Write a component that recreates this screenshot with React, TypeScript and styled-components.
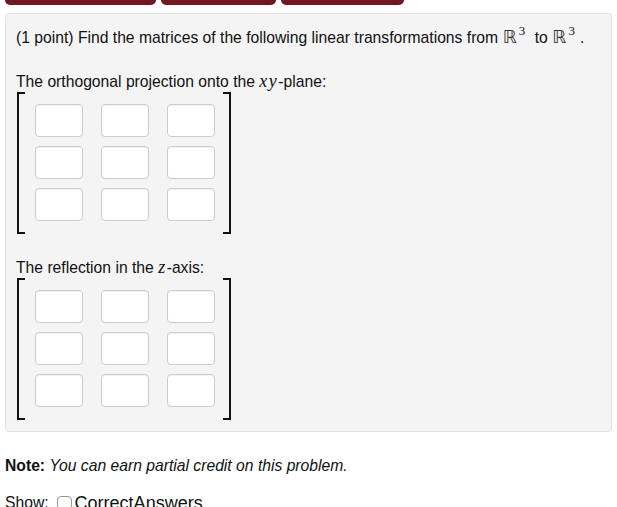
import React from 'react'
import styled, { createGlobalStyle } from 'styled-components'

const GlobalStyle = createGlobalStyle`
  html, body {
    margin: 0;
    padding: 0;
    background: #ffffff;
    overflow: hidden;
  }
  body {
    font-family: "Liberation Sans", Arial, Helvetica, sans-serif;
    font-size: 15.7px;
    color: #111111;
  }
`

const Page = styled.div`
  width: 617px;
  height: 507px;
  overflow: hidden;
`

const TabRow = styled.div`
  display: flex;
  gap: 5px;
  padding-left: 5px;
  height: 5px;
`

const Tab = styled.div<{ $w: number }>`
  width: ${(p) => p.$w}px;
  height: 5px;
  background: #6e1a24;
  border-radius: 0 0 5px 5px;
`

const Problem = styled.div`
  margin: 8px 0 0 5px;
  width: 607px;
  box-sizing: border-box;
  background: #f4f4f4;
  border: 1px solid #e1e1e1;
  border-radius: 4px;
  padding: 14px 10px 11px 10px;
`

const Line = styled.div<{ $gap?: number }>`
  height: 20px;
  line-height: 20px;
  margin-top: ${(p) => p.$gap ?? 0}px;
  white-space: nowrap;
`

const MathVar = styled.span`
  font-family: "Liberation Serif", "DejaVu Serif", serif;
  font-style: italic;
  font-size: 18px;
  line-height: 14px;
  letter-spacing: 1.5px;
`

const Reals = styled.span`
  font-family: "DejaVu Sans", sans-serif;
  font-size: 18px;
  line-height: 14px;
  color: #333;
`

const Sup = styled.sup`
  font-family: "Liberation Serif", serif;
  font-size: 13px;
  vertical-align: 8px;
  line-height: 0;
  margin-left: 2px;
  margin-right: 5px;
`

const Matrix = styled.div`
  display: flex;
  align-items: stretch;
  margin-left: 1px;
`

const Bracket = styled.div<{ $side: 'left' | 'right' }>`
  width: 6px;
  border: 2px solid #111;
  ${(p) => (p.$side === 'left' ? 'border-right: none;' : 'border-left: none;')}
`

const Grid = styled.div`
  display: grid;
  grid-template-columns: repeat(3, 48px);
  grid-auto-rows: 33px;
  column-gap: 18px;
  row-gap: 9px;
  padding: 12px 8px 13px 10px;
`

const Cell = styled.input`
  box-sizing: border-box;
  width: 48px;
  height: 33px;
  margin: 0;
  background: #ffffff;
  border: 1px solid #cccccc;
  border-radius: 4px;
  box-shadow: inset 0 1px 1px rgba(0, 0, 0, 0.06);
  outline: none;
`

const Note = styled.div`
  margin: 24px 0 0 5px;
  line-height: 20px;
`

const Italic = styled.em`
  font-style: italic;
`

const ShowRow = styled.div`
  margin: 17px 0 0 5px;
  line-height: 20px;
  display: flex;
  align-items: center;
`

const Check = styled.span`
  display: inline-block;
  width: 13px;
  height: 12px;
  border: 1px solid #999;
  border-radius: 4px;
  background: #fff;
  margin: 0 3px 0 8px;
`

const CheckLabel = styled.span`
  font-size: 18px;
`

const MatrixInput = () => (
  <Matrix>
    <Bracket $side="left" />
    <Grid>
      {Array.from({ length: 9 }).map((_, i) => (
        <Cell key={i} type="text" />
      ))}
    </Grid>
    <Bracket $side="right" />
  </Matrix>
)

export default function App() {
  return (
    <Page>
      <GlobalStyle />
      <TabRow>
        <Tab $w={151} />
        <Tab $w={115} />
        <Tab $w={123} />
      </TabRow>
      <Problem>
        <Line>
          (1 point) Find the matrices of the following linear transformations from{' '}
          <Reals>ℝ</Reals>
          <Sup>3</Sup> to <Reals>ℝ</Reals>
          <Sup>3</Sup>.
        </Line>
        <Line $gap={24}>
          The orthogonal projection onto the <MathVar>xy</MathVar>-plane:
        </Line>
        <MatrixInput />
        <Line $gap={24}>
          The reflection in the <MathVar>z</MathVar>-axis:
        </Line>
        <MatrixInput />
      </Problem>
      <Note>
        <b>Note:</b> <Italic>You can earn partial credit on this problem.</Italic>
      </Note>
      <ShowRow>
        Show:
        <Check />
        <CheckLabel>CorrectAnswers</CheckLabel>
      </ShowRow>
    </Page>
  )
}
